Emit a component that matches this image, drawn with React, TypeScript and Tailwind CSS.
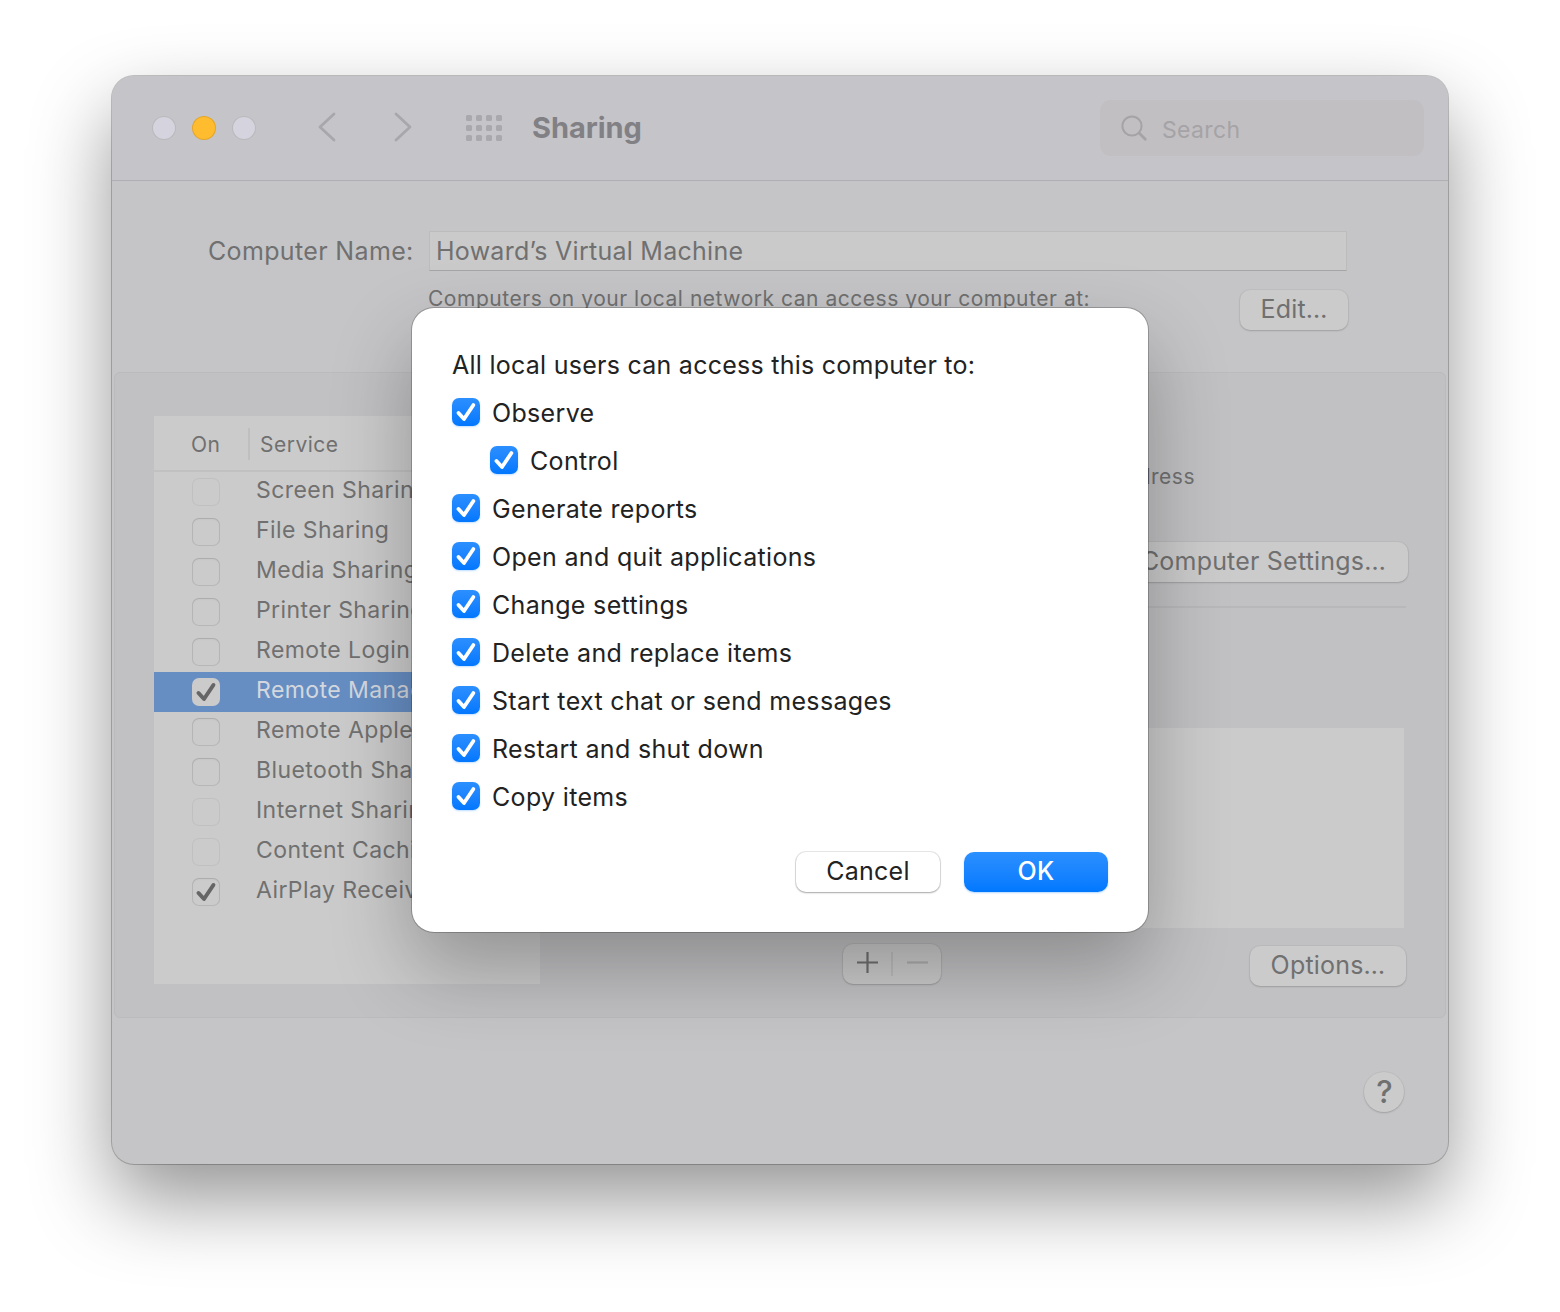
import type { ReactNode } from "react";

type Service = {
  name: string;
  on?: boolean;
  disabled?: boolean;
  selected?: boolean;
};

const services: Service[] = [
  { name: "Screen Sharing", disabled: true },
  { name: "File Sharing" },
  { name: "Media Sharing" },
  { name: "Printer Sharing" },
  { name: "Remote Login" },
  { name: "Remote Management", on: true, selected: true },
  { name: "Remote Apple Events" },
  { name: "Bluetooth Sharing" },
  { name: "Internet Sharing", disabled: true },
  { name: "Content Caching", disabled: true },
  { name: "AirPlay Receiver", on: true },
];

const permissions = [
  { label: "Observe" },
  { label: "Control", nested: true },
  { label: "Generate reports" },
  { label: "Open and quit applications" },
  { label: "Change settings" },
  { label: "Delete and replace items" },
  { label: "Start text chat or send messages" },
  { label: "Restart and shut down" },
  { label: "Copy items" },
];

const CheckMark = ({ width = 3.8 }: { width?: number }) => (
  <svg viewBox="0 0 28 28" className="h-7 w-7" fill="none" stroke="currentColor" strokeWidth={width} strokeLinecap="round" strokeLinejoin="round">
    <path d="M6.5 15 12 21 21.4 7" />
  </svg>
);

const DimButton = ({ className, children }: { className: string; children: ReactNode }) => (
  <button
    type="button"
    className={`h-10 shrink-0 rounded-[10px] bg-[#cbcbcb] pb-0.5 text-[25px] leading-[38px] tracking-[0.2px] whitespace-nowrap text-[#707070] shadow-[0_0_0_1px_rgba(0,0,0,0.03),0_1px_2px_rgba(0,0,0,0.16)] ${className}`}
  >
    {children}
  </button>
);

const Toolbar = () => (
  <header className="flex h-[105px] items-center border-b border-[#aeaeb3] bg-[#c5c4c9] pr-6 pl-[41px]">
    <div className="flex gap-[18px]">
      <span className="h-[22px] w-[22px] rounded-full bg-[#d5d3dd] shadow-[0_0_0_1px_rgba(0,0,0,0.06)]" />
      <span className="h-[22px] w-[22px] rounded-full bg-[#febc2e] shadow-[0_0_0_1px_#e5a528]" />
      <span className="h-[22px] w-[22px] rounded-full bg-[#d5d3dd] shadow-[0_0_0_1px_rgba(0,0,0,0.06)]" />
    </div>
    <svg viewBox="0 0 20 30" className="mb-0.5 ml-[62px] h-[30px] w-5" fill="none" stroke="#a8a7ab" strokeWidth="2.8" strokeLinecap="round" strokeLinejoin="round">
      <path d="M17 2 3 15 17 28" />
    </svg>
    <svg viewBox="0 0 20 30" className="mb-0.5 ml-[56px] h-[30px] w-5" fill="none" stroke="#a8a7ab" strokeWidth="2.8" strokeLinecap="round" strokeLinejoin="round">
      <path d="M3 2 17 15 3 28" />
    </svg>
    <div className="mb-px ml-[53px] grid grid-cols-4 gap-1">
      {Array.from({ length: 12 }, (_, i) => (
        <span key={i} className="h-1.5 w-1.5 rounded-[1.5px] bg-[#a9a8ac]" />
      ))}
    </div>
    <h1 className="ml-[30px] text-[29px] font-bold tracking-[-0.05px] text-[#818085]">Sharing</h1>
    <label className="ml-auto flex h-14 w-[324px] items-center rounded-[11px] bg-[#c1bfc2] pl-5 text-[#a5a3a6]">
      <svg viewBox="0 0 28 28" className="h-7 w-7" fill="none" stroke="currentColor" strokeLinecap="round">
        <circle cx="12" cy="12" r="9.6" strokeWidth="2" />
        <path d="M19.3 19.3 25.3 25.3" strokeWidth="2.8" />
      </svg>
      <span className="ml-3.5 pt-[5px] text-[23px] tracking-[0.35px]">Search</span>
    </label>
  </header>
);

const ServiceTable = () => (
  <div className="h-[568px] w-[386px] shrink-0 bg-[#cbcbcb] text-[#707070]">
    <div className="flex h-14 items-center border-b-2 border-[#c1c1c1] text-[21px] tracking-[0.5px]">
      <span className="w-[94px] pt-[3px] pl-[37px]">On</span>
      <span className="mt-0.5 h-8 w-0.5 bg-[#bfbfbf]" />
      <span className="pt-[3px] pl-[10px]">Service</span>
    </div>
    {services.map((service) => (
      <div key={service.name} className={`flex h-10 items-center pl-[38px] ${service.selected ? "bg-[#668ec3] text-[#d4d8de]" : ""}`}>
        <span
          className={`h-7 w-7 shrink-0 rounded-[7px] text-[#666] ${
            service.selected
              ? "bg-[#cbcbcb]"
              : service.disabled
                ? "shadow-[inset_0_0_0_1px_rgba(0,0,0,0.05)]"
                : "shadow-[inset_0_0_0_1px_rgba(0,0,0,0.09),inset_0_1px_2px_rgba(0,0,0,0.08)]"
          }`}
        >
          {service.on && <CheckMark width={4} />}
        </span>
        <span className="ml-9 pb-[3px] text-[23px] tracking-[0.43px] whitespace-nowrap">{service.name}</span>
      </div>
    ))}
  </div>
);

const ServiceDetail = () => (
  <div className="flex flex-1 flex-col items-end text-[#707070]">
    <p className="mt-[45px] mr-[213px] text-[21px] leading-8 tracking-[0.5px] whitespace-nowrap">
      Others can manage your computer at this address
    </p>
    <DimButton className="mt-[49px] w-[300px] pr-[22px] text-right">Computer Settings…</DimButton>
    <div className="mt-6 mr-0.5 h-0.5 w-[562px] bg-[#b8b8ba]" />
    <div className="mt-[120px] mr-1 h-[200px] w-[560px] bg-[#cbcbcb]" />
    <div className="mt-4 mr-0.5 flex w-[563px] items-start justify-between">
      <div className="flex h-10 w-[98px] items-center rounded-[10px] bg-[#cbcbcb] shadow-[0_0_0_1px_rgba(0,0,0,0.04),0_1px_2px_rgba(0,0,0,0.16)]">
        <svg viewBox="0 0 98 40" className="h-10 w-[98px]" fill="none" strokeWidth="2.2">
          <path d="M14 18.500H35M24.500 8V29" stroke="#6f6f6f" />
          <path d="M49 8V32" stroke="#b8b8b8" strokeWidth="1.500" />
          <path d="M64 18.500H85" stroke="#adadad" />
        </svg>
      </div>
      <DimButton className="mt-0.5 w-[156px]">Options…</DimButton>
    </div>
  </div>
);

const PermissionsSheet = () => (
  <div
    role="dialog"
    className="absolute top-[232px] left-[300px] h-[624px] w-[736px] rounded-[22px] bg-white px-10 pt-[33px] text-[25px] tracking-[0.26px] text-[#222] shadow-[0_0_0_1px_rgba(0,0,0,0.22),0_36px_80px_rgba(0,0,0,0.28)]"
  >
    <h2 className="leading-[48px]">All local users can access this computer to:</h2>
    {permissions.map(({ label, nested }) => (
      <label key={label} className={`flex h-12 items-center ${nested ? "pl-[38px]" : ""}`}>
        <span className="mb-0.5 h-7 w-7 rounded-[7px] bg-linear-to-b from-[#2b8fff] to-[#0177ff] text-white shadow-[0_1px_2px_rgba(0,122,255,0.25)]">
          <CheckMark />
        </span>
        <span className="ml-3 leading-[48px] tracking-[0.33px]">{label}</span>
      </label>
    ))}
    <div className="mt-[31px] flex justify-end gap-6 leading-[38px]">
      <button type="button" className="h-10 w-36 rounded-[10px] bg-white pb-0.5 shadow-[0_0_0_1px_rgba(0,0,0,0.09),0_1px_2px_rgba(0,0,0,0.28)]">
        Cancel
      </button>
      <button
        type="button"
        className="h-10 w-36 rounded-[10px] bg-linear-to-b from-[#2b90ff] to-[#0078ff] pb-0.5 font-medium text-white shadow-[0_1px_2px_rgba(0,122,255,0.3)]"
      >
        OK
      </button>
    </div>
  </div>
);

const App = () => (
  <main className="h-[1312px] w-[1560px] overflow-hidden bg-white pt-[76px] pl-[112px] font-['Inter',sans-serif]">
    <div className="relative h-[1088px] w-[1336px] rounded-[22px] bg-[#c5c5c7] shadow-[0_0_0_1px_rgba(0,0,0,0.22),0_36px_80px_rgba(0,0,0,0.42)]">
      <div className="flex h-full flex-col overflow-hidden rounded-[22px]">
        <Toolbar />

        <section className="flex h-[191px] pt-[50px] pl-[96px] text-[#707070]">
          <span className="w-[221px] text-[25px] leading-[40px] tracking-[0.35px] whitespace-nowrap">Computer Name:</span>
          <div className="w-[918px]">
            <div className="h-10 border border-[#bcbcbc] border-b-[#a5a5a5] bg-[#cacaca] pl-1.5 text-[25px] leading-[38px] tracking-[0.26px]">
              Howard’s Virtual Machine
            </div>
            <div className="flex justify-between pt-[13px]">
              <p className="-ml-px text-[21px] leading-[30px] tracking-[0.53px]">
                Computers on your local network can access your computer at:
              </p>
              <DimButton className="mt-[6px] -mr-px w-[108px]">Edit…</DimButton>
            </div>
          </div>
        </section>

        <section className="mx-0.5 flex h-[646px] rounded-[6px] border border-[#bbbbbd] bg-[#c1c1c3] pt-[43px] pr-[37px] pl-[39px]">
          <ServiceTable />
          <ServiceDetail />
        </section>

        <footer className="flex justify-end pt-[54px] pr-11">
          <button
            type="button"
            className="h-10 w-10 rounded-full bg-[#cbcbcb] pl-px text-[31px] leading-10 font-medium text-[#707070] shadow-[0_0_0_1px_rgba(0,0,0,0.03),0_1px_2px_rgba(0,0,0,0.16)]"
          >
            ?
          </button>
        </footer>
      </div>

      <PermissionsSheet />
    </div>
  </main>
);

export default App;
